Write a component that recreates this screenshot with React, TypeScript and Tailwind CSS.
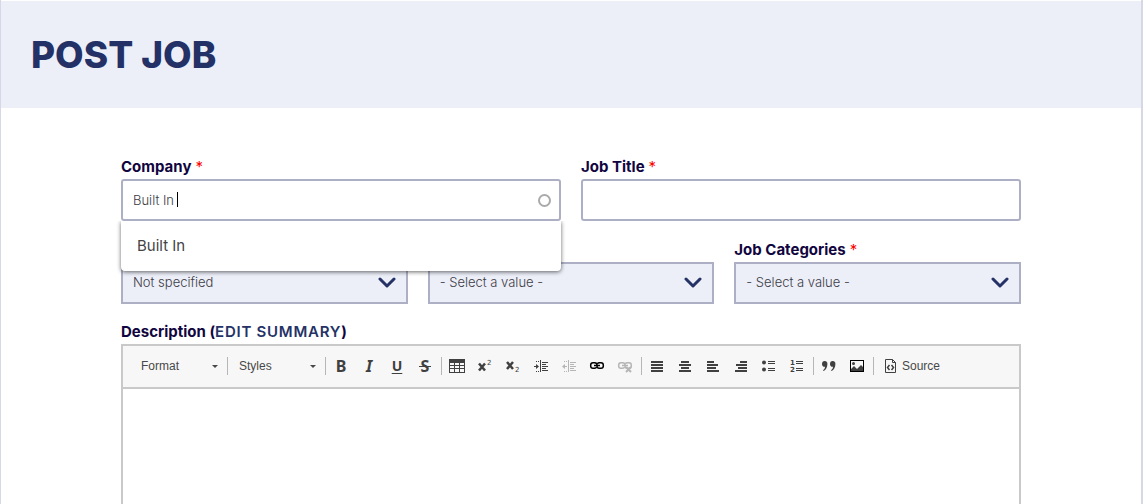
import { useState } from "react";
import type { ReactNode } from "react";

type FieldLabelProps = {
  htmlFor: string;
  required?: boolean;
  children: ReactNode;
};

type SelectFieldProps = {
  id: string;
  label?: string;
  name: string;
  required?: boolean;
  options: string[];
};

const companies = ["Built In"];

function FieldLabel({ htmlFor, required, children }: FieldLabelProps) {
  return (
    <label htmlFor={htmlFor} className="block h-[22px] text-[15px] leading-5 font-bold text-[#110540]">
      {children}
      {required && <span className="ml-1 font-normal text-[#f00]">*</span>}
    </label>
  );
}

function SelectField({ id, label, name, required, options }: SelectFieldProps) {
  return (
    <div className="flex flex-col justify-end">
      {label && (
        <FieldLabel htmlFor={id} required={required}>
          {label}
        </FieldLabel>
      )}
      <div className="relative">
        <select
          id={id}
          aria-label={name}
          className="block h-[42px] w-full appearance-none border-2 border-[#adb0c5] bg-[#eceef8] pr-10 pl-[10px] text-[13px] font-light text-[#3c3c46] outline-none"
        >
          {options.map((option) => (
            <option key={option}>{option}</option>
          ))}
        </select>
        <svg
          className="pointer-events-none absolute top-[15px] right-3 h-3 w-[18px]"
          viewBox="0 0 18 12"
          fill="none"
          stroke="#253266"
          strokeWidth="3"
          strokeLinecap="round"
          strokeLinejoin="round"
        >
          <path d="M2 2l7 7 7-7" />
        </svg>
      </div>
    </div>
  );
}

function ToolbarSelect({ label }: { label: string }) {
  return (
    <div className="relative w-[94px]">
      <select
        aria-label={label}
        className="block h-7 w-full appearance-none bg-transparent pl-[10px] font-['Liberation_Sans',Arial,sans-serif] text-xs text-[#484848] outline-none"
      >
        <option>{label}</option>
      </select>
      <span className="pointer-events-none absolute top-[13px] right-[7px] border-x-3 border-t-3 border-x-transparent border-t-[#474747]" />
    </div>
  );
}

function Separator() {
  return <span className="mr-px ml-[2px] h-[18px] w-px shrink-0 bg-[#b6b6b6]" />;
}

function ToolButton({ label, disabled, children }: { label: string; disabled?: boolean; children: ReactNode }) {
  return (
    <button
      type="button"
      aria-label={label}
      disabled={disabled}
      className="flex h-7 w-7 shrink-0 items-center justify-center text-[#404040] disabled:opacity-35"
    >
      {children}
    </button>
  );
}

function Icon({ children }: { children: ReactNode }) {
  return (
    <svg className="h-4 w-4" viewBox="0 0 16 16" fill="currentColor">
      {children}
    </svg>
  );
}

function Lines({ rows }: { rows: [number, number][] }) {
  return (
    <Icon>
      {rows.map(([x, width], index) => (
        <rect key={index} x={x} y={3 + index * 3} width={width} height="2" />
      ))}
    </Icon>
  );
}

function IndentIcon({ outdent }: { outdent?: boolean }) {
  return (
    <Icon>
      <path d="M7 2h1v12H7zM9 4h6v1H9zM9 6h4v1H9zM9 8h6v1H9zM9 10h4v1H9zM9 12h6v1H9z" />
      <path d="M3 3h1v1H3zM5 3h1v1H5zM3 13h1v1H3zM5 13h1v1H5z" />
      <path d={outdent ? "M1 8.5L4 6v2h2v1H4v2z" : "M6 8.5L3 6v2H1v1h2v2z"} />
    </Icon>
  );
}

function ChainShape() {
  return (
    <g fill="none" stroke="currentColor" strokeWidth="1.5">
      <path d="M8 7.5V7a2.300 2.300 0 0 0-2.300-2.300H4a2.300 2.300 0 0 0-2.300 2.300v1A2.300 2.300 0 0 0 4 10.300h1.700A2.300 2.300 0 0 0 7.700 9.200" />
      <path d="M8 7.5V8a2.300 2.300 0 0 0 2.300 2.300H12a2.300 2.300 0 0 0 2.300-2.300V7A2.300 2.300 0 0 0 12 4.700h-1.700A2.300 2.300 0 0 0 8.300 5.800" />
      <path d="M5 7.5h6" />
    </g>
  );
}

function Toolbar() {
  return (
    <div className="flex h-[43px] items-center overflow-hidden border-b-2 border-[#c9c9c9] bg-[#f7f7f7] pb-px pl-2">
      <ToolbarSelect label="Format" />
      <Separator />
      <ToolbarSelect label="Styles" />
      <Separator />
      <ToolButton label="Bold">
        <span className="font-['Noto_Sans',sans-serif] text-base font-bold">B</span>
      </ToolButton>
      <ToolButton label="Italic">
        <span className="font-['Noto_Sans',sans-serif] text-base font-bold italic">I</span>
      </ToolButton>
      <ToolButton label="Underline">
        <span className="font-['Noto_Sans',sans-serif] text-sm font-bold underline underline-offset-2">U</span>
      </ToolButton>
      <ToolButton label="Strikethrough">
        <span className="font-['Noto_Sans',sans-serif] text-base font-bold line-through">&#8202;S&#8202;</span>
      </ToolButton>
      <Separator />
      <ToolButton label="Table">
        <Icon>
          <path d="M0 1h16v14H0zM1 5v2h4V5zM6 5v2h4V5zM11 5v2h4V5zM1 8v2h4V8zM6 8v2h4V8zM11 8v2h4V8zM1 11v3h4v-3zM6 11v3h4v-3zM11 11v3h4v-3z" fillRule="evenodd" />
        </Icon>
      </ToolButton>
      <ToolButton label="Superscript">
        <Icon>
          <path d="M2 5.500l6 7M8 5.500l-6 7" stroke="currentColor" strokeWidth="2.500" />
          <text x="10" y="7" className="font-['DejaVu_Sans',sans-serif] text-[7px]">2</text>
        </Icon>
      </ToolButton>
      <ToolButton label="Subscript">
        <Icon>
          <path d="M2 4l6 7M8 4l-6 7" stroke="currentColor" strokeWidth="2.500" />
          <text x="10" y="14" className="font-['DejaVu_Sans',sans-serif] text-[7px]">2</text>
        </Icon>
      </ToolButton>
      <ToolButton label="Increase indent">
        <IndentIcon />
      </ToolButton>
      <ToolButton label="Decrease indent" disabled>
        <IndentIcon outdent />
      </ToolButton>
      <ToolButton label="Link">
        <svg className="h-4 w-4 text-black" viewBox="0 0 16 16">
          <ChainShape />
        </svg>
      </ToolButton>
      <ToolButton label="Unlink" disabled>
        <Icon>
          <ChainShape />
          <path d="M9 9l5 5M14 9l-5 5" stroke="currentColor" strokeWidth="2" />
        </Icon>
      </ToolButton>
      <Separator />
      <ToolButton label="Justify">
        <Lines rows={[[2, 12], [2, 12], [2, 12], [2, 12]]} />
      </ToolButton>
      <ToolButton label="Center">
        <Lines rows={[[4, 8], [2, 12], [4, 8], [2, 12]]} />
      </ToolButton>
      <ToolButton label="Align left">
        <Lines rows={[[2, 7], [2, 11], [2, 9], [2, 12]]} />
      </ToolButton>
      <ToolButton label="Align right">
        <Lines rows={[[7, 7], [3, 11], [5, 9], [2, 12]]} />
      </ToolButton>
      <ToolButton label="Bulleted list">
        <Icon>
          <circle cx="3" cy="4.500" r="2" />
          <circle cx="3" cy="11.500" r="2" />
          <path d="M7 3h7v1H7zM7 5h7v1H7zM7 10h7v1H7zM7 12h7v1H7z" />
        </Icon>
      </ToolButton>
      <ToolButton label="Numbered list">
        <Icon>
          <text x="1" y="7" className="font-['DejaVu_Sans',sans-serif] text-[7px] font-bold">1</text>
          <text x="1" y="14" className="font-['DejaVu_Sans',sans-serif] text-[7px] font-bold">2</text>
          <path d="M7 3h7v1H7zM7 5h7v1H7zM7 10h7v1H7zM7 12h7v1H7z" />
        </Icon>
      </ToolButton>
      <Separator />
      <ToolButton label="Block quote">
        <Icon>
          <path d="M3.500 3a2.600 2.600 0 0 1 2.900 2.900C6.400 9 5 12 2.500 13l-.5-.8c1.300-.8 2-2 2-3.400C2.200 9 1 7.800 1 5.900 1 4.200 2 3 3.500 3z" />
          <path d="M11.500 3a2.600 2.600 0 0 1 2.900 2.900c0 3.100-1.400 6.100-3.900 7.100l-.5-.8c1.300-.8 2-2 2-3.400-1.800.2-3-1-3-2.900C9 4.200 10 3 11.500 3z" />
        </Icon>
      </ToolButton>
      <ToolButton label="Image">
        <Icon>
          <path d="M1 2h14v12H1zM2 3v10h12V3z" fillRule="evenodd" className="text-black" />
          <circle cx="4.500" cy="5.500" r="1.500" />
          <path d="M2 13v-2l3-3 3 3 4-4 2 2v4z" />
        </Icon>
      </ToolButton>
      <Separator />
      <button
        type="button"
        className="flex h-7 shrink-0 items-center gap-1 px-[7px] font-['Liberation_Sans',Arial,sans-serif] text-xs text-[#484848]"
      >
        <svg className="h-4 w-4" viewBox="0 0 16 16" fill="none" stroke="#404040">
          <path d="M3.500 1.500h7l3 3v10h-10z" />
          <path d="M10.500 1.500v3h3" />
          <path d="M7.500 7l-2 2.500 2 2.500M9.500 7l2 2.500-2 2.500" strokeWidth="1.500" />
        </svg>
        Source
      </button>
    </div>
  );
}

export default function App() {
  const [company, setCompany] = useState("Built In");
  const [title, setTitle] = useState("");

  return (
    <div className="min-h-screen overflow-hidden border-r-2 border-l border-[#d6d8e8] bg-white pt-px font-[Inter,'Open_Sans',sans-serif]">
      <header className="flex h-[107px] items-center bg-[#eceff8] px-[30px]">
        <h1 className="text-[37px] leading-none font-extrabold text-[#243166]">POST JOB</h1>
      </header>

      <form className="mx-auto mt-[49px] max-w-[900px]">
        <div className="grid grid-cols-2 gap-5">
          <div>
            <FieldLabel htmlFor="company" required>
              Company
            </FieldLabel>
            <div className="relative">
              <input
                id="company"
                type="text"
                autoComplete="off"
                value={company}
                onChange={(event) => setCompany(event.target.value)}
                className="block h-[42px] w-full rounded-[3px] border-2 border-[#adb0c5] bg-white pr-9 pl-[10px] text-[13px] font-light text-[#3c3c46] outline-none"
              />
              <span className="absolute top-[13px] left-[56px] h-[15px] w-px bg-black" />
              <span className="absolute top-[15px] right-[10px] h-[13px] w-[13px] rounded-full border-2 border-[#aaa]" />
              <ul
                role="listbox"
                className="absolute inset-x-0 top-full z-10 rounded-b bg-white shadow-[0_1px_4px_rgba(0,0,0,0.6)] [clip-path:inset(0_-8px_-8px_-8px)]"
              >
                {companies.map((name) => (
                  <li key={name} role="option" aria-selected={false} className="px-4 text-[15px] leading-[50px] text-[#444]">
                    {name}
                  </li>
                ))}
              </ul>
            </div>
          </div>
          <div>
            <FieldLabel htmlFor="title" required>
              Job Title
            </FieldLabel>
            <input
              id="title"
              type="text"
              value={title}
              onChange={(event) => setTitle(event.target.value)}
              className="block h-[42px] w-full rounded-[3px] border-2 border-[#adb0c5] bg-white px-[10px] text-[13px] font-light text-[#3c3c46] outline-none"
            />
          </div>
        </div>

        <div className="mt-[19px] grid grid-cols-3 gap-5">
          <SelectField id="remote" name="Remote" options={["Not specified"]} />
          <SelectField id="level" name="Job Level" options={["- Select a value -"]} />
          <SelectField
            id="categories"
            label="Job Categories"
            name="Job Categories"
            required
            options={["- Select a value -"]}
          />
        </div>

        <div className="mt-[18px]">
          <div className="h-[22px] text-[15px] leading-5 font-bold text-[#110540]">
            <label htmlFor="description">Description</label> (
            <a href="#summary" className="font-semibold tracking-wider text-[#253266]">
              EDIT SUMMARY
            </a>
            )
          </div>
          <div className="border-2 border-[#c9c9c9]">
            <Toolbar />
            <textarea id="description" className="block h-[120px] w-full resize-none bg-white p-5 text-[13px] outline-none" />
          </div>
        </div>
      </form>
    </div>
  );
}
